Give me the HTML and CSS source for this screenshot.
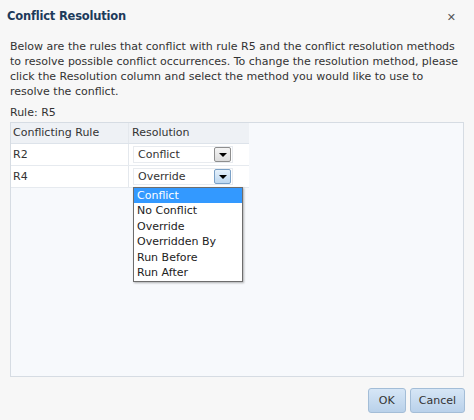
FILE: index.html
```html
<!DOCTYPE html>
<html lang="en">
  <head>
    <meta charset="UTF-8" />
    <title>Conflict Resolution</title>
    <link rel="stylesheet" href="styles.css">
  </head>
  <body>
    <div class="dialog">
      <div class="dialog-header">
        <h1 class="dialog-title">Conflict Resolution</h1>
        <span class="close">&#x2715;</span>
      </div>
      <p class="intro">
        Below are the rules that conflict with rule R5 and the conflict resolution methods
        to resolve possible conflict occurrences. To change the resolution method, please
        click the Resolution column and select the method you would like to use to
        resolve the conflict.
      </p>
      <div class="rule-label">Rule: R5</div>
      <div class="grid">
        <div class="grid-head">
          <div class="col col-rule">Conflicting Rule</div>
          <div class="col col-res">Resolution</div>
        </div>
        <div class="grid-row">
          <div class="col col-rule">R2</div>
          <div class="col col-res">
            <div class="select">
              <span class="select-value">Conflict</span>
              <span class="select-btn"><span class="arrow"></span></span>
            </div>
          </div>
        </div>
        <div class="grid-row">
          <div class="col col-rule">R4</div>
          <div class="col col-res">
            <div class="select open">
              <span class="select-value">Override</span>
              <span class="select-btn"><span class="arrow"></span></span>
              <ul class="options">
                <li class="selected">Conflict</li>
                <li>No Conflict</li>
                <li>Override</li>
                <li>Overridden By</li>
                <li>Run Before</li>
                <li>Run After</li>
              </ul>
            </div>
          </div>
        </div>
      </div>
      <div class="dialog-footer">
        <button class="btn">OK</button>
        <button class="btn">Cancel</button>
      </div>
    </div>
  </body>
</html>
```

FILE: styles.css
```css
body {
  margin: 0;
  padding: 0;
  background-color: #f7f7f7;
  font-family: "DejaVu Sans", Verdana, sans-serif;
  font-size: 11px;
  color: #333;
}

.dialog {
  width: 474px;
  height: 420px;
  box-sizing: border-box;
  padding: 0 10px 0 10px;
  display: flex;
  flex-direction: column;
}

.dialog-header {
  display: flex;
  align-items: center;
  justify-content: space-between;
  height: 32px;
  margin-left: -3px;
}

.dialog-title {
  margin: 0;
  font-size: 11.5px;
  letter-spacing: -0.2px;
  font-weight: bold;
  color: #1d3b5b;
}

.close {
  font-size: 11px;
  color: #555;
  margin-right: 8px;
  margin-top: 2px;
}

.intro {
  margin: 7px 0 0 0;
  line-height: 15px;
}

.rule-label {
  margin-top: 6px;
  line-height: 15px;
}

.grid {
  flex: 1;
  margin-top: 2px;
  border: 1px solid #d6dce3;
  background-color: #f7f9fc;
}

.grid-head,
.grid-row {
  display: flex;
  width: 238px;
  background-color: #fff;
}

.grid-head {
  height: 20px;
  line-height: 20px;
  background-color: #eef1f5;
  border-bottom: 1px solid #dde3ea;
}

.grid-row {
  height: 21px;
  line-height: 21px;
  border-bottom: 1px solid #e6eaef;
}

.col {
  box-sizing: border-box;
  padding-left: 2px;
}

.col-rule {
  width: 118px;
  border-right: 1px solid #e4e8ed;
}

.col-res {
  width: 120px;
  padding-left: 4px;
  display: flex;
  align-items: center;
}

.grid-head .col-res {
  padding-left: 3px;
}

.select {
  position: relative;
  display: flex;
  align-items: center;
  width: 100px;
  height: 17px;
  border: 1px solid #e8ebef;
  box-sizing: border-box;
  background-color: #fff;
}

.select-value {
  flex: 1;
  padding-left: 4px;
}

.select-btn {
  width: 17px;
  height: 15px;
  box-sizing: border-box;
  border: 1px solid #8e8e8e;
  border-radius: 2px;
  background: linear-gradient(#f4f4f4, #dcdcdc);
  display: flex;
  align-items: center;
  justify-content: center;
  margin-right: 1px;
}

.open .select-btn {
  border-color: #7aa0c6;
  background: linear-gradient(#e6f1fb, #bcd7f0);
}

.arrow {
  width: 0;
  height: 0;
  border-left: 4px solid transparent;
  border-right: 4px solid transparent;
  border-top: 4px solid #000;
}

.options {
  position: absolute;
  top: 18px;
  left: -1px;
  width: 110px;
  box-sizing: border-box;
  margin: 0;
  padding: 0 0 1px 0;
  list-style: none;
  background-color: #fff;
  border: 1px solid #6d6d6d;
  box-shadow: 1px 1px 2px rgba(0, 0, 0, 0.3);
  line-height: 15.4px;
  color: #222;
}

.options li {
  padding-left: 3px;
}

.options .selected {
  background-color: #3399ff;
  color: #fff;
}

.dialog-footer {
  display: flex;
  justify-content: flex-end;
  gap: 4px;
  padding: 11px 0 7px 0;
  margin-right: -1px;
}

.btn {
  height: 25px;
  padding: 0 8px;
  min-width: 38px;
  border: 1px solid #a3bdd7;
  border-radius: 3px;
  background: linear-gradient(#d6e6f6, #b9d1ea);
  font-family: "DejaVu Sans", Verdana, sans-serif;
  font-size: 11px;
  color: #333;
}
```
